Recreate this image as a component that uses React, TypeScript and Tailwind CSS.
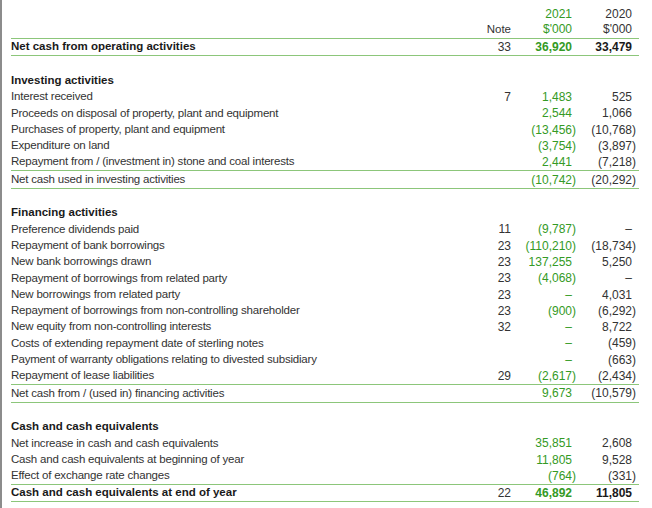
import React from 'react';

type Row = {
  label: string;
  note?: string;
  cur?: string;
  prev?: string;
  kind?: 'heading' | 'item' | 'total' | 'grand' | 'spacer';
  lineAbove?: boolean;
  lineBelow?: boolean;
};

const rows: Row[] = [
  { label: 'Net cash from operating activities', note: '33', cur: '36,920', prev: '33,479', kind: 'grand', lineAbove: true, lineBelow: true },
  { label: '', kind: 'spacer' },
  { label: 'Investing activities', kind: 'heading' },
  { label: 'Interest received', note: '7', cur: '1,483', prev: '525' },
  { label: 'Proceeds on disposal of property, plant and equipment', cur: '2,544', prev: '1,066' },
  { label: 'Purchases of property, plant and equipment', cur: '(13,456)', prev: '(10,768)' },
  { label: 'Expenditure on land', cur: '(3,754)', prev: '(3,897)' },
  { label: 'Repayment from / (investment in) stone and coal interests', cur: '2,441', prev: '(7,218)' },
  { label: 'Net cash used in investing activities', cur: '(10,742)', prev: '(20,292)', kind: 'total', lineAbove: true, lineBelow: true },
  { label: '', kind: 'spacer' },
  { label: 'Financing activities', kind: 'heading' },
  { label: 'Preference dividends paid', note: '11', cur: '(9,787)', prev: '–' },
  { label: 'Repayment of bank borrowings', note: '23', cur: '(110,210)', prev: '(18,734)' },
  { label: 'New bank borrowings drawn', note: '23', cur: '137,255', prev: '5,250' },
  { label: 'Repayment of borrowings from related party', note: '23', cur: '(4,068)', prev: '–' },
  { label: 'New borrowings from related party', note: '23', cur: '–', prev: '4,031' },
  { label: 'Repayment of borrowings from non-controlling shareholder', note: '23', cur: '(900)', prev: '(6,292)' },
  { label: 'New equity from non-controlling interests', note: '32', cur: '–', prev: '8,722' },
  { label: 'Costs of extending repayment date of sterling notes', cur: '–', prev: '(459)' },
  { label: 'Payment of warranty obligations relating to divested subsidiary', cur: '–', prev: '(663)' },
  { label: 'Repayment of lease liabilities', note: '29', cur: '(2,617)', prev: '(2,434)' },
  { label: 'Net cash from / (used in) financing activities', cur: '9,673', prev: '(10,579)', kind: 'total', lineAbove: true, lineBelow: true },
  { label: '', kind: 'spacer' },
  { label: 'Cash and cash equivalents', kind: 'heading' },
  { label: 'Net increase in cash and cash equivalents', cur: '35,851', prev: '2,608' },
  { label: 'Cash and cash equivalents at beginning of year', cur: '11,805', prev: '9,528' },
  { label: 'Effect of exchange rate changes', cur: '(764)', prev: '(331)' },
  { label: 'Cash and cash equivalents at end of year', note: '22', cur: '46,892', prev: '11,805', kind: 'grand', lineAbove: true, lineBelow: true },
];

// accounting style: closing bracket hangs past the digits
const Num: React.FC<{ v?: string; className?: string }> = ({ v, className }) => {
  if (!v) return <div />;
  const neg = v.endsWith(')');
  return (
    <div className={`text-right text-[12px] ${className ?? ''} ${neg ? '' : 'pr-[4px]'}`}>{v}</div>
  );
};

export default function App() {
  return (
    <div
      className="h-[508px] w-[652px] border-l-2 border-[#8c8c8c] bg-white pl-[9px] pr-[13px] text-[#333]"
      style={{ fontFamily: '"Liberation Sans", Arial, sans-serif' }}
    >
      <div className="grid h-[38px] grid-cols-[1fr_50px_65px_60px] items-end pr-[3px] pb-[1px] text-[12px] leading-[15px]">
        <div />
        <div className="text-right text-[11.5px]">Note</div>
        <div className="pr-[4px] text-right text-[#349a25]">
          <div>2021</div>
          <div>$'000</div>
        </div>
        <div className="pr-[4px] text-right">
          <div>2020</div>
          <div>$'000</div>
        </div>
      </div>

      {rows.map((r, i) => {
        if (r.kind === 'spacer') return <div key={i} className="h-[16.3px]" />;
        const bold = r.kind === 'heading' || r.kind === 'grand';
        return (
          <div
            key={i}
            className={`grid h-[16.3px] grid-cols-[1fr_50px_65px_60px] items-center pr-[3px] leading-none ${
              r.lineAbove ? 'border-t border-[#8cc67a]' : ''
            } ${r.lineBelow ? 'border-b border-[#8cc67a]' : ''} ${r.lineAbove || r.lineBelow ? 'box-content' : ''}`}
          >
            <div
              className={
                bold
                  ? 'text-[11.5px] font-bold text-[#1a1a1a]'
                  : 'text-[11.5px] tracking-[-0.2px]'
              }
            >
              {r.label}
            </div>
            <div className="text-right text-[12px]">{r.note}</div>
            <Num v={r.cur} className={`text-[#349a25] ${r.kind === 'grand' ? 'font-bold' : ''}`} />
            <Num v={r.prev} className={r.kind === 'grand' ? 'font-bold text-[#1a1a1a]' : ''} />
          </div>
        );
      })}
    </div>
  );
}
